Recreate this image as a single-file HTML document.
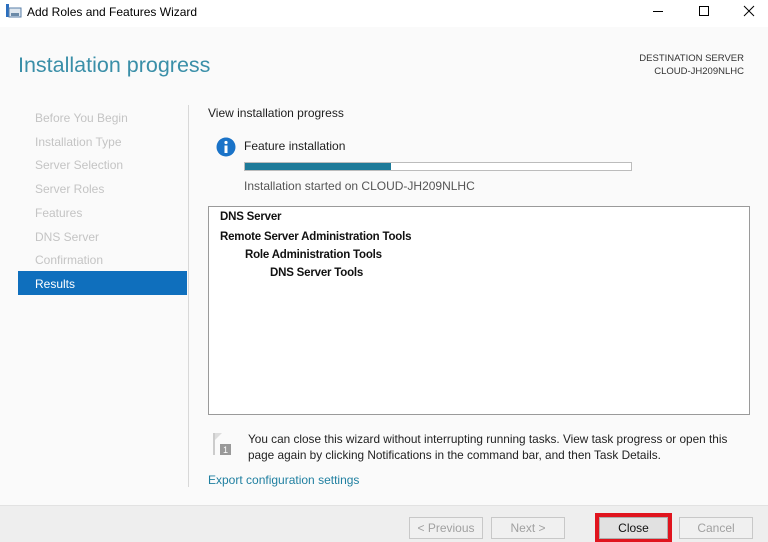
<!DOCTYPE html>
<html><head><meta charset="utf-8"><style>
*{margin:0;padding:0;box-sizing:border-box}
body{width:768px;height:542px;overflow:hidden;background:#fafafa;font-family:"Liberation Sans",sans-serif;font-size:12px;color:#1e1e1e;position:relative}
.abs{position:absolute;white-space:nowrap}
.tb{position:absolute;left:0;top:0;width:768px;height:27px;background:#fff}
.nav{position:absolute;left:35px;color:#c4c4c4;font-size:12px}
.btn{position:absolute;top:517px;height:22px;border:1px solid #c8c8c8;background:#f0f0f0;color:#a0a0a0;text-align:center;line-height:20px;font-size:12px}
.b{font-weight:bold;color:#111;font-size:11.5px;letter-spacing:-0.2px}
</style></head><body>
<div class="tb"></div>
<svg class="abs" style="left:6px;top:4px" width="16" height="14" viewBox="0 0 16 14"><rect x="0" y="0" width="3" height="13" fill="#2b6fbf"/><rect x="3" y="4" width="12" height="9" fill="#dfe7ef" stroke="#5a7fa8"/><rect x="5" y="9" width="8" height="3" fill="#6b8aa8"/></svg>
<div class="abs" style="left:27px;top:5px;font-size:12px;color:#000">Add Roles and Features Wizard</div>
<svg class="abs" style="left:652px;top:5px" width="12" height="12"><line x1="1" y1="6.5" x2="11" y2="6.5" stroke="#000"/></svg>
<svg class="abs" style="left:698px;top:5px" width="12" height="12"><rect x="1.5" y="1.5" width="9" height="9" fill="none" stroke="#000"/></svg>
<svg class="abs" style="left:743px;top:5px" width="12" height="12"><path d="M1 1L11 11M11 1L1 11" stroke="#000"/></svg>
<div class="abs" style="left:18px;top:53px;font-size:21.5px;color:#3a8fa8">Installation progress</div>
<div class="abs" style="right:24px;top:52px;font-size:9.5px;color:#333;text-align:right;line-height:13px">DESTINATION SERVER<br>CLOUD-JH209NLHC</div>
<div class="nav" style="top:111px">Before You Begin</div>
<div class="nav" style="top:135px">Installation Type</div>
<div class="nav" style="top:158px">Server Selection</div>
<div class="nav" style="top:182px">Server Roles</div>
<div class="nav" style="top:206px">Features</div>
<div class="nav" style="top:230px">DNS Server</div>
<div class="nav" style="top:253px">Confirmation</div>
<div class="abs" style="left:18px;top:271px;width:169px;height:24px;background:#0f6fbd"></div>
<div class="nav" style="top:277px;color:#fff">Results</div>
<div class="abs" style="left:188px;top:105px;width:1px;height:382px;background:#d8d8d8"></div>
<div class="abs" style="left:208px;top:106px">View installation progress</div>
<svg class="abs" style="left:216px;top:137px" width="20" height="20"><circle cx="10" cy="10" r="9.5" fill="#1a73c8"/><circle cx="10" cy="5.5" r="1.6" fill="#fff"/><rect x="8.5" y="8.5" width="3" height="7.5" fill="#fff"/></svg>
<div class="abs" style="left:244px;top:139px">Feature installation</div>
<div class="abs" style="left:244px;top:162px;width:388px;height:9px;border:1px solid #bcbcbc;background:#fff"><div style="width:146px;height:7px;background:#1d7a99"></div></div>
<div class="abs" style="left:244px;top:179px;color:#555">Installation started on CLOUD-JH209NLHC</div>
<div class="abs" style="left:208px;top:206px;width:542px;height:209px;border:1px solid #9a9a9a;background:#fff"></div>
<div class="abs b" style="left:220px;top:211px">DNS Server</div>
<div class="abs b" style="left:220px;top:231px">Remote Server Administration Tools</div>
<div class="abs b" style="left:245px;top:249px">Role Administration Tools</div>
<div class="abs b" style="left:270px;top:267px">DNS Server Tools</div>
<svg class="abs" style="left:211px;top:431px" width="24" height="26"><rect x="2" y="2" width="2" height="22" fill="#ccc"/><path d="M4 2L11 2L4 9Z" fill="#ddd"/><rect x="9" y="13" width="11" height="11" fill="#999"/><text x="12" y="22" font-size="9" fill="#fff" font-family="Liberation Sans">1</text></svg>
<div class="abs" style="left:248px;top:431px;line-height:16px;color:#222;font-size:11.8px">You can close this wizard without interrupting running tasks. View task progress or open this<br>page again by clicking Notifications in the command bar, and then Task Details.</div>
<div class="abs" style="left:208px;top:473px;color:#1f7fa0">Export configuration settings</div>
<div class="abs" style="left:0;top:505px;width:768px;height:37px;background:#eeeeee;border-top:1px solid #e2e2e2"></div>
<div class="btn" style="left:409px;width:74px">&lt; Previous</div>
<div class="btn" style="left:491px;width:74px">Next &gt;</div>
<div class="abs" style="left:595px;top:513px;width:77px;height:29px;border:4px solid #e0141e"></div>
<div class="btn" style="left:599px;top:517px;width:69px;height:22px;color:#111;background:#e1e1e1;border-color:#adadad">Close</div>
<div class="btn" style="left:679px;width:74px">Cancel</div>
</body></html>
